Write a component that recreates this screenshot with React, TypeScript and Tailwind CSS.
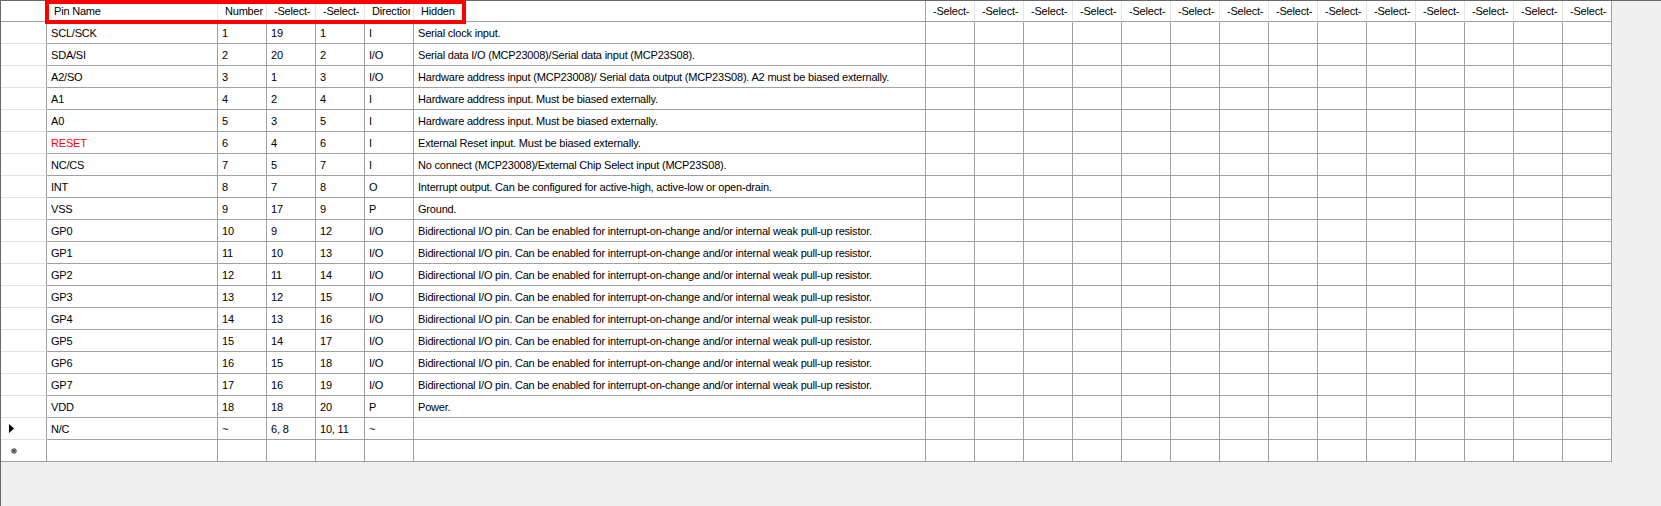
import React from "react";

const BIDIR =
  "Bidirectional I/O pin. Can be enabled for interrupt-on-change and/or internal weak pull-up resistor.";

const rows: string[][] = [
  ["SCL/SCK", "1", "19", "1", "I", "Serial clock input."],
  ["SDA/SI", "2", "20", "2", "I/O", "Serial data I/O (MCP23008)/Serial data input (MCP23S08)."],
  [
    "A2/SO",
    "3",
    "1",
    "3",
    "I/O",
    "Hardware address input (MCP23008)/ Serial data output (MCP23S08). A2 must be biased externally.",
  ],
  ["A1", "4", "2", "4", "I", "Hardware address input. Must be biased externally."],
  ["A0", "5", "3", "5", "I", "Hardware address input. Must be biased externally."],
  ["RESET", "6", "4", "6", "I", "External Reset input. Must be biased externally."],
  ["NC/CS", "7", "5", "7", "I", "No connect (MCP23008)/External Chip Select input (MCP23S08)."],
  [
    "INT",
    "8",
    "7",
    "8",
    "O",
    "Interrupt output. Can be configured for active-high, active-low or open-drain.",
  ],
  ["VSS", "9", "17", "9", "P", "Ground."],
  ["GP0", "10", "9", "12", "I/O", BIDIR],
  ["GP1", "11", "10", "13", "I/O", BIDIR],
  ["GP2", "12", "11", "14", "I/O", BIDIR],
  ["GP3", "13", "12", "15", "I/O", BIDIR],
  ["GP4", "14", "13", "16", "I/O", BIDIR],
  ["GP5", "15", "14", "17", "I/O", BIDIR],
  ["GP6", "16", "15", "18", "I/O", BIDIR],
  ["GP7", "17", "16", "19", "I/O", BIDIR],
  ["VDD", "18", "18", "20", "P", "Power."],
  ["N/C", "~", "6, 8", "10, 11", "~", ""],
  ["", "", "", "", "", ""],
];

const mainWidths = ["w-[171px]", "w-[49px]", "w-[49px]", "w-[49px]", "w-[49px]", "w-[512px]"];
const mainHeaders = ["Pin Name", "Number", "-Select-", "-Select-", "Direction", "Hidden"];
const extra = Array.from({ length: 14 }, (_, i) => i);

function Triangle() {
  return (
    <svg width="5" height="9" viewBox="0 0 5 9" className="block">
      <polygon points="0,0 5,4.5 0,9" fill="#000" />
    </svg>
  );
}

function Star() {
  return (
    <svg width="6" height="6" viewBox="0 0 6 6" className="block">
      <g stroke="#505050" strokeWidth="1.2">
        <line x1="3" y1="0" x2="3" y2="6" />
        <line x1="0" y1="3" x2="6" y2="3" />
        <line x1="0.8" y1="0.8" x2="5.2" y2="5.2" />
        <line x1="5.2" y1="0.8" x2="0.8" y2="5.2" />
      </g>
    </svg>
  );
}

export default function App() {
  return (
    <div
      className="relative w-[1661px] h-[506px] overflow-hidden text-[11px] tracking-[-0.2px] text-black"
      style={{ fontFamily: '"Liberation Sans", Arial, sans-serif' }}
    >
      <div className="h-full w-full bg-[#f0f0f0] border-t border-l border-[#696969]">
        <div className="flex flex-col w-[1611px]">
          {/* header */}
          <div className="flex h-[21px] bg-white">
            <div className="w-[46px] h-full border-r border-b border-[#a0a0a0]" />
            {mainHeaders.map((h, i) => (
              <div
                key={i}
                className={`${mainWidths[i]} h-full flex items-center pl-[7px] pr-[3px] pt-[1px] whitespace-nowrap border-b border-b-[#a0a0a0] ${
                  i === 5 ? "border-r border-r-[#a0a0a0]" : "border-r border-r-[#e5e5e5]"
                }`}
              >
                <span className="block min-w-0 overflow-hidden">{h}</span>
              </div>
            ))}
            {extra.map((i) => (
              <div
                key={i}
                className={`w-[49px] h-full flex items-center pl-[7px] pt-[1px] whitespace-nowrap overflow-hidden border-b border-b-[#a0a0a0] border-r ${
                  i === 13 ? "border-r-[#a0a0a0]" : "border-r-[#e5e5e5]"
                }`}
              >
                -Select-
              </div>
            ))}
          </div>
          {/* rows */}
          {rows.map((r, ri) => (
            <div key={ri} className="flex h-[22px] bg-white">
              <div
                className={`w-[46px] h-full flex items-center border-r border-r-[#a0a0a0] border-b ${
                  ri === rows.length - 1 ? "border-b-[#a0a0a0] pl-[10px]" : "border-b-[#e3e3e3] pl-[8px]"
                }`}
              >
                {ri === rows.length - 2 && <Triangle />}
                {ri === rows.length - 1 && <Star />}
              </div>
              {r.map((c, ci) => (
                <div
                  key={ci}
                  className={`${mainWidths[ci]} h-full flex items-center pl-[4px] pt-[1px] whitespace-nowrap overflow-hidden border-r border-b border-[#a0a0a0] ${
                    ci === 0 && c === "RESET" ? "text-[#ff0000]" : ""
                  }`}
                >
                  {c}
                </div>
              ))}
              {extra.map((i) => (
                <div key={i} className="w-[49px] h-full border-r border-b border-[#a0a0a0]" />
              ))}
            </div>
          ))}
        </div>
      </div>
      <div className="absolute left-[45px] top-0 w-[421px] h-[24px] border-4 border-[#ff0000]" />
    </div>
  );
}
